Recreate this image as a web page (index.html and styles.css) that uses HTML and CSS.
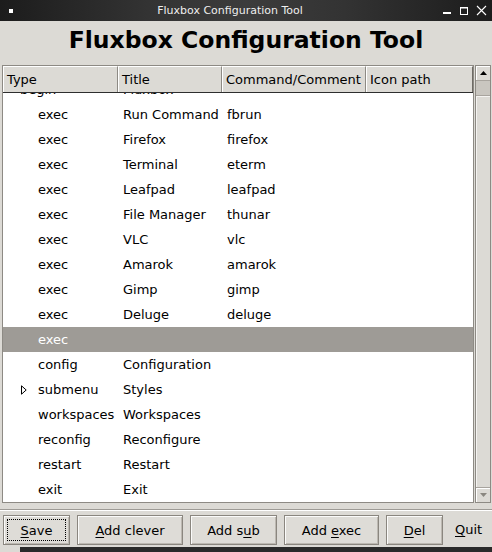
FILE: index.html
```html
<!DOCTYPE html>
<html>
<head>
<meta charset="utf-8">
<link rel="stylesheet" href="styles.css">
</head>
<body>
<div class="win">
  <div class="titlebar">
    <div class="tb-left"><span class="tb-dot"></span></div>
    <div class="tb-title">Fluxbox Configuration Tool</div>
    <div class="tb-right">
      <svg class="tb-icon" width="10" height="10" viewBox="0 0 10 10"><rect x="1" y="6" width="8" height="2" fill="#fff"/></svg>
      <svg class="tb-icon" width="10" height="10" viewBox="0 0 10 10"><rect x="1.5" y="1.5" width="7" height="7" fill="none" stroke="#fff" stroke-width="1"/><rect x="1" y="1" width="8" height="1.5" fill="#fff"/></svg>
      <svg class="tb-icon" width="11" height="11" viewBox="0 0 11 11"><path d="M1 1 L10 10 M10 1 L1 10" stroke="#fff" stroke-width="1.1" fill="none"/></svg>
    </div>
  </div>

  <h1 class="heading">Fluxbox Configuration Tool</h1>

  <div class="content">
    <div class="tree">
      <div class="thead">
        <div class="th">Type</div>
        <div class="th">Title</div>
        <div class="th">Command/Comment</div>
        <div class="th th-last">Icon path</div>
      </div>
      <div class="tbody">
        <div class="rows">
          <div class="row"><div class="c c-type lvl0">begin</div><div class="c">Fluxbox</div><div class="c"></div><div class="c"></div></div>
          <div class="row"><div class="c c-type">exec</div><div class="c">Run Command</div><div class="c">fbrun</div><div class="c"></div></div>
          <div class="row"><div class="c c-type">exec</div><div class="c">Firefox</div><div class="c">firefox</div><div class="c"></div></div>
          <div class="row"><div class="c c-type">exec</div><div class="c">Terminal</div><div class="c">eterm</div><div class="c"></div></div>
          <div class="row"><div class="c c-type">exec</div><div class="c">Leafpad</div><div class="c">leafpad</div><div class="c"></div></div>
          <div class="row"><div class="c c-type">exec</div><div class="c">File Manager</div><div class="c">thunar</div><div class="c"></div></div>
          <div class="row"><div class="c c-type">exec</div><div class="c">VLC</div><div class="c">vlc</div><div class="c"></div></div>
          <div class="row"><div class="c c-type">exec</div><div class="c">Amarok</div><div class="c">amarok</div><div class="c"></div></div>
          <div class="row"><div class="c c-type">exec</div><div class="c">Gimp</div><div class="c">gimp</div><div class="c"></div></div>
          <div class="row"><div class="c c-type">exec</div><div class="c">Deluge</div><div class="c">deluge</div><div class="c"></div></div>
          <div class="row row-sel"><div class="c c-type">exec</div><div class="c"></div><div class="c"></div><div class="c"></div></div>
          <div class="row"><div class="c c-type">config</div><div class="c">Configuration</div><div class="c"></div><div class="c"></div></div>
          <div class="row"><div class="c c-type"><svg class="expander" width="6" height="10" viewBox="0 0 6 10"><path d="M0.5 0.8 L5.2 5 L0.5 9.2 Z" fill="#fff" stroke="#000" stroke-width="1"/></svg>submenu</div><div class="c">Styles</div><div class="c"></div><div class="c"></div></div>
          <div class="row"><div class="c c-type">workspaces</div><div class="c">Workspaces</div><div class="c"></div><div class="c"></div></div>
          <div class="row"><div class="c c-type">reconfig</div><div class="c">Reconfigure</div><div class="c"></div><div class="c"></div></div>
          <div class="row"><div class="c c-type">restart</div><div class="c">Restart</div><div class="c"></div><div class="c"></div></div>
          <div class="row"><div class="c c-type">exit</div><div class="c">Exit</div><div class="c"></div><div class="c"></div></div>
          <div class="row"><div class="c c-type lvl0">end</div><div class="c"></div><div class="c"></div><div class="c"></div></div>
        </div>
      </div>
    </div>
    <div class="scrollbar">
      <div class="sb-btn"><svg width="7" height="4" viewBox="0 0 7 4"><path d="M0 4 L3.5 0 L7 4 Z" fill="#000"/></svg></div>
      <div class="sb-trough">
        <div class="sb-slider"></div>
      </div>
      <div class="sb-btn"><svg width="7" height="4" viewBox="0 0 7 4"><path d="M0 0 L3.5 4 L7 0 Z" fill="#8a8780"/></svg></div>
    </div>
  </div>

  <div class="sep"></div>

  <div class="buttons">
    <div class="btn b-save"><span class="focus"><span><u>S</u>ave</span></span></div>
    <div class="btn b-clever"><span><u>A</u>dd clever</span></div>
    <div class="btn b-sub"><span>Add s<u>u</u>b</span></div>
    <div class="btn b-exec"><span>Add <u>e</u>xec</span></div>
    <div class="btn b-del"><span><u>D</u>el</span></div>
    <div class="btn-flat"><span><u>Q</u>uit</span></div>
  </div>

  <div class="strip"><div class="strip-left"></div><div class="strip-dark"></div></div>
</div>
</body>
</html>
```

FILE: styles.css
```css
* { box-sizing: border-box; }
html, body { margin: 0; padding: 0; }
body {
  width: 492px;
  height: 552px;
  overflow: hidden;
  background: #dcdad5;
  font-family: "DejaVu Sans", "Liberation Sans", sans-serif;
  font-size: 13px;
  color: #000;
}
.win { width: 492px; height: 552px; display: flex; flex-direction: column; }

/* title bar */
.titlebar {
  height: 21px;
  display: flex;
  align-items: center;
  background: linear-gradient(to right, #1c1c1c 0%, #333 30%, #3c3c3c 50%, #333 70%, #1c1c1c 100%);
  color: #fff;
}
.tb-left { width: 20px; height: 21px; display: flex; align-items: center; padding-left: 9px; }
.tb-dot { width: 4px; height: 4px; background: #fff; display: block; }
.tb-title { flex: 1; text-align: center; font-size: 11px; line-height: 21px; color: #eee; }
.tb-right { width: 52px; display: flex; align-items: center; gap: 7px; padding-left: 2px; }
.tb-icon { display: block; }

/* heading */
.heading {
  margin: 0;
  padding: 5px 0 11px;
  font-size: 23.5px;
  line-height: 28px;
  font-weight: bold;
  text-align: center;
}

/* tree */
.content { display: flex; height: 438px; padding-left: 2px; gap: 1px; }
.tree {
  width: 472px;
  height: 438px;
  border: 1px solid #8d8a84;
  background: #fff;
  display: flex;
  flex-direction: column;
}
.thead {
  height: 27px;
  display: grid;
  grid-template-columns: 115px 104px 144px 1fr;
  background: #dcdad5;
  border-bottom: 1px solid #2e2e2e;
}
.th {
  line-height: 25px;
  padding-left: 3px;
  border-right: 1px solid #8d8a84;
  border-left: 1px solid #fff;
  border-top: 1px solid #fff;
  white-space: nowrap;
  overflow: hidden;
}
.th-last { border-right: 1px solid #6e6b66; }
.tbody { flex: 1; overflow: hidden; }
.rows { margin-top: -16px; }
.row {
  height: 25px;
  display: grid;
  grid-template-columns: 115px 104px 144px 1fr;
  line-height: 25px;
}
.c { padding-left: 5px; white-space: nowrap; overflow: hidden; }
.c-type { padding-left: 35px; display: flex; align-items: center; }
.c-type.lvl0 { padding-left: 17px; }
.expander { margin-left: -17px; margin-right: 11px; display: block; }
.row-sel { background: #9e9b96; color: #fff; }

/* scrollbar */
.scrollbar {
  width: 16px;
  height: 438px;
  display: flex;
  flex-direction: column;
  border: 1px solid #8d8a84;
  background: #c9c6c0;
}
.sb-btn {
  height: 15px;
  background: #dcdad5;
  display: flex;
  align-items: center;
  justify-content: center;
  border-bottom: 1px solid #a8a49e;
  box-shadow: inset 1px 1px #fff;
}
.sb-btn:last-child { border-bottom: 0; border-top: 1px solid #a8a49e; }
.sb-trough { flex: 1; padding-top: 14px; display: flex; flex-direction: column; }
.sb-slider {
  flex: 1;
  background: #dcdad5;
  border-top: 1px solid #a8a49e;
  box-shadow: inset 1px 1px #f4f3f1;
}

/* separator + buttons */
.sep { margin-top: 6px; height: 2px; border-top: 1px solid #9d9a95; border-bottom: 1px solid #fff; }
.buttons { display: flex; padding: 4px 0 0 3px; gap: 7px; height: 34px; }
.btn {
  height: 30px;
  display: flex;
  align-items: center;
  justify-content: center;
  background: #dedcd7;
  border: 1px solid #8a867f;
  box-shadow: inset 1px 1px #fbfbfa, inset -1px -1px #bcb8b1;
  white-space: nowrap;
}
.b-save { width: 67px; padding: 3px; }
.b-clever { width: 106px; }
.b-sub { width: 87px; }
.b-exec { width: 95px; }
.b-del { width: 57px; }
.focus {
  flex: 1;
  align-self: stretch;
  display: flex;
  align-items: center;
  justify-content: center;
  border: 1px dotted #000;
}
.btn-flat { height: 30px; line-height: 30px; margin-left: 5px; white-space: nowrap; }
u { text-decoration-thickness: 1px; text-underline-offset: 2px; }

.strip { margin-top: 2px; flex: 1; display: flex; }
.strip-left { width: 20px; }
.strip-dark { flex: 1; background: #2a2a2a; }
```
